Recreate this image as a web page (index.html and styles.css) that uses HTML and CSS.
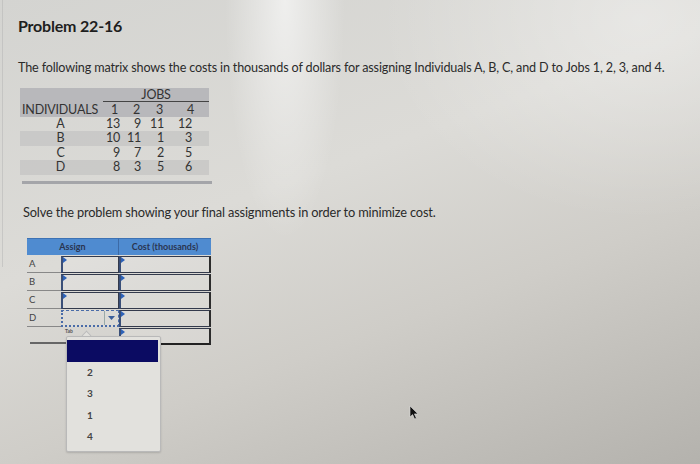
FILE: index.html
```html
<!DOCTYPE html>
<html>
<head>
<meta charset="utf-8">
<link rel="stylesheet" href="styles.css">
</head>
<body>
<div class="page">
  <h1 class="title">Problem 22-16</h1>
  <p class="intro">The following matrix shows the costs in thousands of dollars for assigning Individuals A, B, C, and D to Jobs 1, 2, 3, and 4.</p>

  <div class="matrix">
    <div class="mrow head1"><span class="lbl"></span><span class="jobs">JOBS</span></div>
    <div class="mrow head2"><span class="lbl">INDIVIDUALS</span><span class="c1">1</span><span class="c2">2</span><span class="c3">3</span><span class="c4">4</span></div>
    <div class="mrow"><span class="lbl ctr">A</span><span class="c1">13</span><span class="c2">9</span><span class="c3">11</span><span class="c4">12</span></div>
    <div class="mrow shade"><span class="lbl ctr">B</span><span class="c1">10</span><span class="c2">11</span><span class="c3">1</span><span class="c4">3</span></div>
    <div class="mrow"><span class="lbl ctr">C</span><span class="c1">9</span><span class="c2">7</span><span class="c3">2</span><span class="c4">5</span></div>
    <div class="mrow shade"><span class="lbl ctr">D</span><span class="c1">8</span><span class="c2">3</span><span class="c3">5</span><span class="c4">6</span></div>
  </div>
  <div class="matrix-rule"></div>

  <p class="solve">Solve the problem showing your final assignments in order to minimize cost.</p>

  <div class="answer">
    <div class="ahead first">Assign</div>
    <div class="ahead">Cost (thousands)</div>

    <div class="rlabel">A</div>
    <div class="cell assign"><i class="mark"></i></div>
    <div class="cell cost"><i class="mark"></i></div>

    <div class="rlabel">B</div>
    <div class="cell assign"><i class="mark"></i></div>
    <div class="cell cost"><i class="mark"></i></div>

    <div class="rlabel">C</div>
    <div class="cell assign"><i class="mark"></i></div>
    <div class="cell cost"><i class="mark"></i></div>

    <div class="rlabel">D</div>
    <div class="cell assign focus"><span class="arrowbox"><svg width="7" height="4" viewBox="0 0 7 4"><path d="M0 0H7L3.5 4Z" fill="#3b5f9a"/></svg></span></div>
    <div class="cell cost"><i class="mark"></i></div>

    <div class="rlabel last"></div>
    <div class="emptycell"></div>
    <div class="cell cost lastcost"><i class="mark"></i></div>

    <div class="tip">Tab</div>
    <div class="notch"></div>
    <div class="dropdown">
      <div class="opt sel"></div>
      <div class="opt">2</div>
      <div class="opt">3</div>
      <div class="opt">1</div>
      <div class="opt">4</div>
    </div>
  </div>
</div>
<svg class="cursor" width="10" height="15" viewBox="0 0 10 15"><path d="M1 1V12L3.6 9.6L5.6 14L7.4 13.2L5.4 8.9H9Z" fill="#111" stroke="#ddd" stroke-width="0.6"/></svg>
</body>
</html>
```

FILE: styles.css
```css
html, body {
  margin: 0;
  padding: 0;
}
body {
  width: 700px;
  height: 464px;
  overflow: hidden;
  position: relative;
  font-family: Lato, "Open Sans", "Liberation Sans", sans-serif;
  color: #2a2a2a;
  background:
    radial-gradient(ellipse 60px 240px at 285px 0px, rgba(255,255,255,0.6), rgba(255,255,255,0) 100%),
    radial-gradient(ellipse 260px 200px at 640px 20px, rgba(255,255,255,0.35), rgba(255,255,255,0) 100%),
    linear-gradient(160deg, #d4d4d1 0%, #dcdbd7 40%, #cfcdc8 65%, #b4b2ad 100%);
}
.page {
  padding: 17px 0 0 15px;
  margin-left: 2px;
  border-left: 1px solid rgba(180,180,180,0.5);
  height: 250px;
}
.title {
  margin: 0;
  font-size: 16px;
  font-weight: 700;
  color: #1e1e1e;
  letter-spacing: -0.2px;
  line-height: 18px;
}
.intro {
  margin: 25px 0 0 0;
  font-size: 12.6px;
  line-height: 16px;
  letter-spacing: -0.15px;
  color: #2b2b2b;
}
.matrix {
  margin: 12px 0 0 2px;
  width: 189px;
  font-size: 12.5px;
  color: #333;
  letter-spacing: -0.2px;
}
.mrow {
  display: flex;
  height: 14.4px;
  line-height: 14.4px;
}
.mrow.head1, .mrow.head2 {
  background: #b8b8bb;
  height: 15px;
  line-height: 15px;
}
.mrow.head1 {
  height: 14px;
}
.mrow.shade {
  background: rgba(190,190,190,0.55);
}
.lbl {
  width: 83px;
  flex: none;
  padding-left: 2px;
  box-sizing: border-box;
  white-space: nowrap;
}
.lbl.ctr {
  text-align: center;
  padding-left: 0;
  padding-right: 2px;
}
.jobs {
  flex: 1;
  text-align: center;
  border-bottom: 1px solid #444;
  line-height: 13px;
}
.c1, .c2, .c3, .c4 {
  flex: none;
  text-align: right;
}
.c1 { width: 17px; }
.c2 { width: 21px; }
.c3 { width: 23px; }
.c4 { width: 28px; }
.head2 .c1 { width: 15px; }
.head2 .c2 { width: 22px; }
.head2 .c3 { width: 23px; }
.head2 .c4 { width: 31px; }
.matrix-rule {
  margin: 6px 0 0 4px;
  width: 190px;
  height: 3px;
  background: #a4a5a9;
}
.solve {
  margin: 21px 0 0 5px;
  font-size: 12.8px;
  line-height: 14px;
  letter-spacing: -0.15px;
  color: #2a2a2a;
}
.answer {
  position: relative;
  margin: 19px 0 0 9px;
  display: grid;
  grid-template-columns: 34px 58px 92px;
  grid-template-rows: 17px repeat(5, 18px);
  width: 184px;
}
.ahead {
  background: #4f8bd0;
  font-size: 9px;
  font-weight: 700;
  color: #2a3550;
  text-align: center;
  line-height: 15px;
  border-top: 1px solid #3d72b4;
}
.ahead.first {
  grid-column: span 2;
  border-right: 1px solid #3c6aa6;
}
.rlabel {
  font-size: 9.5px;
  color: #444;
  padding-left: 2px;
  line-height: 18px;
  border-bottom: 1px solid #888;
}
.rlabel.last {
  border-bottom: 2px solid #666;
  margin-left: 3px;
  height: 15px;
}
.cell {
  position: relative;
  border: 1px solid #333a4c;
  box-sizing: border-box;
  margin-top: 1px;
  background: rgba(255,255,255,0.12);
}
.cell.assign {
  border-left: 2px solid #3a4f78;
}
.cell.cost {
  border-left: 2px solid #3a4f78;
  border-right: 2px solid #2c2c2c;
}
.cell.lastcost {
  border-bottom: 2px solid #222;
}
.mark {
  position: absolute;
  top: 0;
  left: 0;
  width: 0;
  height: 0;
  border-top: 3px solid transparent;
  border-bottom: 3px solid transparent;
  border-left: 4px solid #2d62b8;
}
.cell.focus {
  border: 1px dashed #4a6ca8;
  border-left: 2px dotted #4a6ca8;
  border-bottom: 2px dotted #4a6ca8;
}
.arrowbox {
  position: absolute;
  right: 0;
  top: 0;
  bottom: 0;
  width: 13px;
  border-left: 1px solid #9aa;
  display: flex;
  align-items: center;
  justify-content: center;
}
.emptycell {
  border-bottom: 2px solid #666;
  height: 15px;
}
.tip {
  position: absolute;
  left: 38px;
  top: 90px;
  font-size: 5px;
  color: #555;
  font-weight: 700;
}
.notch {
  position: absolute;
  left: 56px;
  top: 94px;
  width: 6px;
  height: 6px;
  border-left: 1px solid #bbb;
  border-top: 1px solid #bbb;
  transform: rotate(45deg);
  background: #e2e1dd;
}
.dropdown {
  position: absolute;
  left: 39px;
  top: 98px;
  width: 95px;
  height: 116px;
  box-sizing: border-box;
  border: 1px solid #b9b9b9;
  border-radius: 2px;
  background: #e2e1dd;
  padding-top: 3px;
  box-shadow: 0 1px 2px rgba(0,0,0,0.15);
}
.opt {
  height: 21.5px;
  line-height: 21.5px;
  padding-left: 20px;
  font-size: 10px;
  font-weight: 700;
  color: #444;
}
.opt.sel {
  height: 22px;
  background: #0b0b62;
  margin: 0 2px 0 0;
}
.cursor {
  position: absolute;
  left: 409px;
  top: 405px;
}
```
